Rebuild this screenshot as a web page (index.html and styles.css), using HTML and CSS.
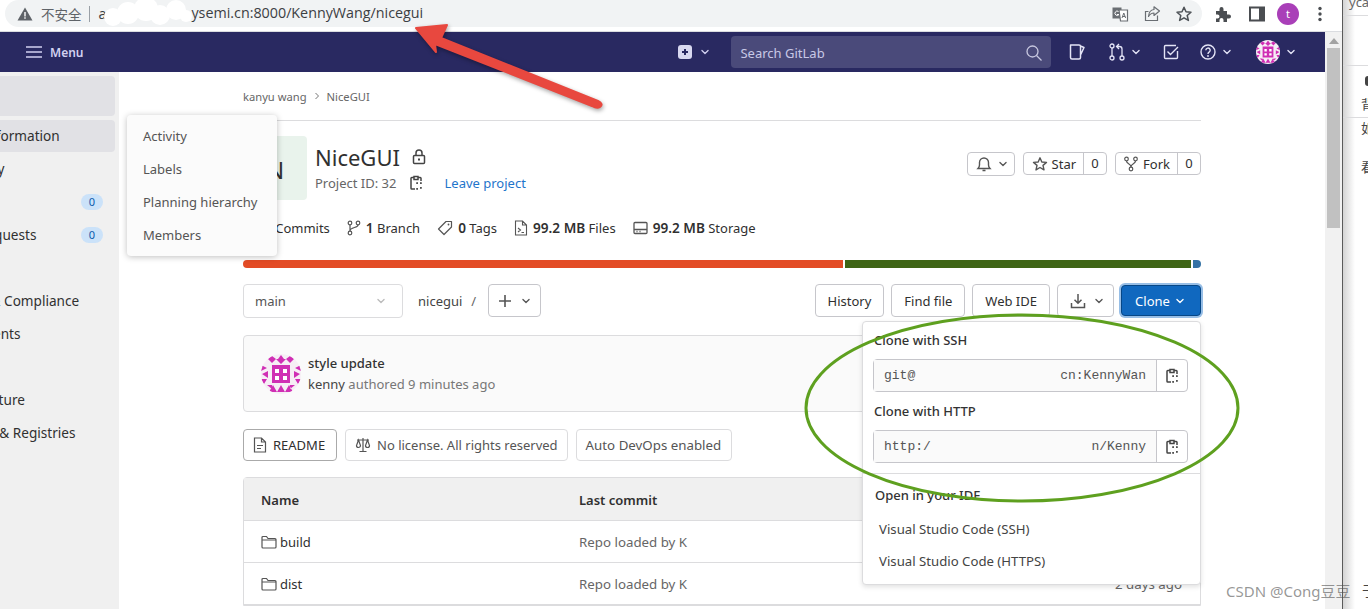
FILE: index.html
```html
<!DOCTYPE html>
<html lang="en">
<head>
    <meta charset="UTF-8">
    <meta name="viewport" content="width=device-width, initial-scale=1.0">
    <title>NiceGUI</title>
    <link rel="stylesheet" href="styles.css">
</head>
<body>
    <!-- Shared icons -->
    <svg class="sprite" width="0" height="0">
        <symbol id="i-chevron" viewBox="0 0 16 16"><path d="M4.500 6.200 8 9.700l3.500-3.500" fill="none" stroke="currentColor" stroke-width="1.500" stroke-linecap="round" stroke-linejoin="round"/></symbol>
        <symbol id="i-copy" viewBox="0 0 16 16"><path d="M6 2.500H3.800c-.5 0-.8.3-.8.8v10c0 .5.3.8.8.8H7M10 2.500h2.200c.5 0 .8.3.8.8V6M6 1.500h4v3H6zM9 9V8h1M12 8h1v1M13 12v1h-1M10 14H9v-1" fill="none" stroke="currentColor" stroke-width="1.500"/></symbol>
        <symbol id="i-folder" viewBox="0 0 16 16"><path d="M1 3.500c0-.6.4-1 1-1h3.500l1.500 2h7c.6 0 1 .4 1 1v7.500c0 .6-.4 1-1 1H2c-.6 0-1-.4-1-1zM1 6h14" fill="none" stroke="currentColor" stroke-width="1.200"/></symbol>
        <symbol id="i-identicon" viewBox="0 0 40 40">
            <clipPath id="round"><circle cx="20" cy="20" r="20"/></clipPath>
            <g clip-path="url(#round)">
                <rect width="40" height="40" fill="#f6eef5"/>
                <path d="M11 11h18v18H11z" fill="#d02fb4"/>
                <path d="M14 15h4v4h-4zM22 15h4v4h-4zM14 22h4v4h-4zM22 22h4v4h-4z" fill="#fff"/>
                <path d="M11 2l4 3-4 4-4-4zM29 2l4 3-4 4-4-4zM20 1l3 4-3 4-3-4zM15 5h10l-5 5zM0 11l6 3-6 3zM40 11l-6 3 6 3zM1 20l6-3v7zM39 20l-6-3v7zM0 25h6l-3 5zM40 25h-6l3 5zM6 31h5v4zM34 31h-5v4zM8 38l4-7 4 7zM16 38l4-7 4 7zM24 38l4-7 4 7z" fill="#d02fb4"/>
            </g>
        </symbol>
    </svg>

    <div class="window">
        <div class="browser">
            <div class="toolbar">
                <div class="omnibox">
                    <svg class="warn" width="16" height="16" viewBox="0 0 16 16"><path d="M8 1.500 15.500 14.500H.5z" fill="#5f6368"/><path d="M7.300 6h1.400v4.500H7.300zM7.300 11.300h1.400v1.400H7.300z" fill="#fff"/></svg>
                    <span class="not-secure">不安全</span>
                    <span class="omni-sep"></span>
                    <span class="url-start">a</span>
                    <span class="url">ysemi.cn:8000/KennyWang/nicegui</span>
                    <div class="omni-icons">
                        <svg width="18" height="18" viewBox="0 0 18 18"><path d="M1.500 2.500h9v11h-9z" fill="#6a6e73"/><path d="M8 5h8.500v11H9.500z" fill="#fff" stroke="#6a6e73" stroke-width="1.200"/><path d="M7.500 6.500a2.200 2.200 0 1 0 .5 3H6" fill="none" stroke="#fff" stroke-width="1"/><path d="M11 13l1.800-5 1.800 5M11.500 11.500h2.600" fill="none" stroke="#6a6e73"/></svg>
                        <svg width="18" height="18" viewBox="0 0 18 18"><path d="M14.500 10.500v5h-12v-9h3" fill="none" stroke="#6a6e73" stroke-width="1.200"/><path d="M16.500 6 11 1.800v2.700C7.500 4.800 5.800 7.500 5.500 11.500 7 9 8.500 8 11 8v2.500z" fill="none" stroke="#6a6e73" stroke-width="1.200" stroke-linejoin="round"/></svg>
                        <svg width="18" height="18" viewBox="0 0 18 18"><path d="M9 2.200 11 6.800l5 .4-3.800 3.300 1.200 4.900L9 12.800l-4.400 2.600 1.200-4.900L2 7.200l5-.4z" fill="none" stroke="#4e5257" stroke-width="1.500" stroke-linejoin="round"/></svg>
                    </div>
                </div>
                <div class="chrome-icons">
                    <svg width="18" height="18" viewBox="0 0 18 18"><path d="M2 6h3.500V4a2 2 0 0 1 4 0v2H13v3.500h2a2 2 0 0 1 0 4h-2V17H9.500v-2a2 2 0 0 0-4 0v2H2v-3.500h1.500a2 2 0 0 0 0-4H2z" fill="#4a4d51"/></svg>
                    <svg class="ci-panel" width="16" height="16" viewBox="0 0 16 16"><path d="M1 1.500h14v13H1z" fill="none" stroke="#4a4d51" stroke-width="2"/><path d="M10 1.500h5v13h-5z" fill="#4a4d51"/></svg>
                    <span class="profile">t</span>
                    <svg class="ci-dots" width="4" height="16" viewBox="0 0 4 16"><circle cx="2" cy="2.500" r="1.700" fill="#4a4d51"/><circle cx="2" cy="8" r="1.700" fill="#4a4d51"/><circle cx="2" cy="13.500" r="1.700" fill="#4a4d51"/></svg>
                </div>
            </div>

            <div class="frame">
                <div class="page">
                    <nav class="navbar">
                        <svg class="menu-icon" width="16" height="16" viewBox="0 0 16 16"><path d="M0 3h16M0 8h16M0 13h16" stroke="#d1d0f0" stroke-width="1.500" stroke-linecap="round"/></svg>
                        <span class="menu-label">Menu</span>
                        <div class="nav-new">
                            <svg width="14" height="14" viewBox="0 0 14 14"><rect width="14" height="14" rx="3" fill="#d8d8f0"/><path d="M7 4v6M4 7h6" stroke="#292961" stroke-width="2"/></svg>
                            <svg class="chev" width="14" height="14"><use href="#i-chevron"/></svg>
                        </div>
                        <div class="nav-search">
                            <span>Search GitLab</span>
                            <svg width="18" height="18" viewBox="0 0 18 18"><circle cx="7.500" cy="7.500" r="5.500" fill="none" stroke="#c8c8e0" stroke-width="1.300"/><path d="m11.500 11.500 5 5" stroke="#c8c8e0" stroke-width="1.300"/></svg>
                        </div>
                        <div class="nav-icons">
                            <svg class="nav-issues" width="16" height="18" viewBox="0 0 16 18"><path d="M1.500 2h8.500c1 0 1.500.7 1.500 1.500v11c0 1-.5 1.500-1.500 1.500H3c-1 0-1.500-.5-1.500-1.500zM11.500 3 15 4.500 11.500 12" fill="none" stroke="#e4e4f6" stroke-width="1.500" stroke-linejoin="round"/></svg>
                            <span class="nav-drop">
                                <svg width="16" height="18" viewBox="0 0 16 18"><circle cx="3" cy="3" r="2" fill="none" stroke="#e4e4f6" stroke-width="1.300"/><circle cx="3" cy="15" r="2" fill="none" stroke="#e4e4f6" stroke-width="1.300"/><circle cx="13" cy="15" r="2" fill="none" stroke="#e4e4f6" stroke-width="1.300"/><path d="M3 5v8M13 13V6c0-1.500-1-2.500-2.500-2.500H8M10 1 7.500 3.500 10 6" fill="none" stroke="#e4e4f6" stroke-width="1.300"/></svg>
                                <svg class="chev" width="14" height="14"><use href="#i-chevron"/></svg>
                            </span>
                            <svg class="nav-todo" width="16" height="16" viewBox="0 0 16 16"><path d="M14.500 7v6.500c0 .6-.4 1-1 1h-11c-.6 0-1-.4-1-1v-11c0-.6.4-1 1-1H13" fill="none" stroke="#e4e4f6" stroke-width="1.400"/><path d="m4.500 7.500 3 3L15 3" fill="none" stroke="#e4e4f6" stroke-width="1.400"/></svg>
                            <span class="nav-drop">
                                <svg width="16" height="16" viewBox="0 0 16 16"><circle cx="8" cy="8" r="7" fill="none" stroke="#e4e4f6" stroke-width="1.400"/><path d="M5.800 6.300a2.200 2.200 0 1 1 3.300 1.900c-.8.500-1.100 1-1.100 1.800" fill="none" stroke="#e4e4f6" stroke-width="1.400"/><circle cx="8" cy="12" r=".9" fill="#e4e4f6"/></svg>
                                <svg class="chev" width="14" height="14"><use href="#i-chevron"/></svg>
                            </span>
                            <span class="nav-drop nav-user">
                                <svg width="24" height="24"><use href="#i-identicon"/></svg>
                                <svg class="chev" width="14" height="14"><use href="#i-chevron"/></svg>
                            </span>
                        </div>
                    </nav>

                    <div class="layout">
                        <aside class="sidebar">
                            <div class="side-context"></div>
                            <a class="side-item active"><span>Project information</span></a>
                            <a class="side-item"><span>Repository</span></a>
                            <a class="side-item"><span>Issues</span><b class="badge">0</b></a>
                            <a class="side-item"><span>Merge requests</span><b class="badge">0</b></a>
                            <a class="side-item"><span>CI/CD</span></a>
                            <a class="side-item"><span>Security &amp; Compliance</span></a>
                            <a class="side-item"><span>Deployments</span></a>
                            <a class="side-item"><span>Monitor</span></a>
                            <a class="side-item"><span>Infrastructure</span></a>
                            <a class="side-item"><span>Packages &amp; Registries</span></a>
                        </aside>

                        <main class="content">
                            <div class="breadcrumb">
                                <span>kanyu wang</span>
                                <svg width="10" height="10" viewBox="0 0 10 10"><path d="m3.500 2 3 3-3 3" fill="none" stroke="#777" stroke-width="1"/></svg>
                                <span>NiceGUI</span>
                            </div>

                            <div class="project-head">
                                <div class="project-avatar">N</div>
                                <div class="project-title">
                                    <h1>NiceGUI
                                        <svg width="14" height="16" viewBox="0 0 14 16"><rect x="1.500" y="6.500" width="11" height="8" rx="1" fill="none" stroke="#444" stroke-width="1.500"/><path d="M4 6.500V4a3 3 0 0 1 6 0v2.500" fill="none" stroke="#444" stroke-width="1.500"/><rect x="6" y="9.500" width="2" height="2" fill="#444"/></svg>
                                    </h1>
                                    <div class="project-id">
                                        <span>Project ID: 32</span>
                                        <svg width="16" height="16"><use href="#i-copy"/></svg>
                                        <a>Leave project</a>
                                    </div>
                                </div>
                                <div class="project-actions">
                                    <button class="btn bell">
                                        <svg width="16" height="16" viewBox="0 0 16 16"><path d="M2 12.500h12c-1-1-1.500-2-1.500-3.500V6.500a4.500 4.500 0 0 0-9 0V9c0 1.500-.5 2.500-1.500 3.500zM6.500 14.500h3" fill="none" stroke="#555" stroke-width="1.400"/></svg>
                                        <svg width="14" height="14"><use href="#i-chevron"/></svg>
                                    </button>
                                    <div class="count-btn">
                                        <span class="count-label star-label">
                                            <svg width="16" height="16" viewBox="0 0 16 16"><path d="M8 1.800 9.800 6l4.700.4-3.500 3 1 4.500L8 11.500l-4 2.400 1-4.500-3.500-3L6.200 6z" fill="none" stroke="#555" stroke-width="1.400" stroke-linejoin="round"/></svg>
                                            Star
                                        </span>
                                        <span class="count-num">0</span>
                                    </div>
                                    <div class="count-btn">
                                        <span class="count-label">
                                            <svg width="16" height="16" viewBox="0 0 16 16"><circle cx="3.500" cy="3" r="1.800" fill="none" stroke="#555" stroke-width="1.200"/><circle cx="12.500" cy="3" r="1.800" fill="none" stroke="#555" stroke-width="1.200"/><circle cx="8" cy="13" r="1.800" fill="none" stroke="#555" stroke-width="1.200"/><path d="M3.500 5c0 3 4.500 2.500 4.500 6M12.500 5c0 3-4.500 2.500-4.500 6" fill="none" stroke="#555" stroke-width="1.200"/></svg>
                                            Fork
                                        </span>
                                        <span class="count-num">0</span>
                                    </div>
                                </div>
                            </div>

                            <div class="stats">
                                <span class="stat">
                                    <svg width="16" height="16" viewBox="0 0 16 16"><circle cx="8" cy="8" r="3" fill="none" stroke="#555" stroke-width="1.400"/><path d="M0 8h5M11 8h5" stroke="#555" stroke-width="1.400"/></svg>
                                    <span><b>3</b> Commits</span>
                                </span>
                                <span class="stat">
                                    <svg width="14" height="16" viewBox="0 0 14 16"><circle cx="3" cy="3" r="1.800" fill="none" stroke="#555" stroke-width="1.200"/><circle cx="3" cy="13" r="1.800" fill="none" stroke="#555" stroke-width="1.200"/><circle cx="11" cy="3" r="1.800" fill="none" stroke="#555" stroke-width="1.200"/><path d="M3 5v6M11 5c0 3-8 2-8 6" fill="none" stroke="#555" stroke-width="1.200"/></svg>
                                    <span><b>1</b> Branch</span>
                                </span>
                                <span class="stat">
                                    <svg width="16" height="16" viewBox="0 0 16 16"><path d="M9 1.500h5.500V7l-7.500 7.500L1.500 9z" fill="none" stroke="#555" stroke-width="1.200" stroke-linejoin="round"/><circle cx="11.500" cy="4.500" r=".9" fill="#555"/></svg>
                                    <span><b>0</b> Tags</span>
                                </span>
                                <span class="stat">
                                    <svg width="14" height="16" viewBox="0 0 14 16"><path d="M1.500 1h7l4 4v10h-11zM8.500 1v4h4M4 8l2.500 2L4 12M7.500 12.500H10" fill="none" stroke="#555" stroke-width="1.100"/></svg>
                                    <span><b>99.2 MB</b> Files</span>
                                </span>
                                <span class="stat">
                                    <svg width="15" height="16" viewBox="0 0 15 16"><path d="M1 3.500c0-.6.4-1 1-1h11c.6 0 1 .4 1 1v9c0 .6-.4 1-1 1H2c-.6 0-1-.4-1-1zM1 9.500h13M3.500 11.500h1M6.500 11.500h1" fill="none" stroke="#555" stroke-width="1.300"/></svg>
                                    <span><b>99.2 MB</b> Storage</span>
                                </span>
                            </div>

                            <div class="lang-bar">
                                <i class="lang-orange"></i>
                                <i class="lang-green"></i>
                                <i class="lang-blue"></i>
                            </div>

                            <div class="tree-bar">
                                <div class="branch-select">
                                    <span>main</span>
                                    <svg width="14" height="14"><use href="#i-chevron"/></svg>
                                </div>
                                <span class="tree-path">nicegui</span>
                                <span class="tree-slash">/</span>
                                <button class="btn add-btn">
                                    <svg width="16" height="16" viewBox="0 0 16 16"><path d="M8 2v12M2 8h12" stroke="#555" stroke-width="1.600"/></svg>
                                    <svg width="14" height="14"><use href="#i-chevron"/></svg>
                                </button>
                                <div class="tree-actions">
                                    <button class="btn">History</button>
                                    <button class="btn">Find file</button>
                                    <button class="btn">Web IDE</button>
                                    <button class="btn dl-btn">
                                        <svg width="16" height="16" viewBox="0 0 16 16"><path d="M8 1v9M4.500 6.800 8 10.300l3.500-3.500M1.500 10v4.500h13V10" fill="none" stroke="#555" stroke-width="1.500"/></svg>
                                        <svg width="14" height="14"><use href="#i-chevron"/></svg>
                                    </button>
                                    <div class="clone-wrap">
                                        <button class="clone-btn">Clone
                                            <svg width="14" height="14"><use href="#i-chevron"/></svg>
                                        </button>
                                        <div class="clone-menu">
                                            <div class="clone-label">Clone with SSH</div>
                                            <div class="clone-field">
                                                <div class="clone-url"><span>git@</span><span>cn:KennyWan</span></div>
                                                <span class="clone-copy"><svg width="16" height="16"><use href="#i-copy"/></svg></span>
                                            </div>
                                            <div class="clone-label">Clone with HTTP</div>
                                            <div class="clone-field">
                                                <div class="clone-url"><span>http:/</span><span>n/Kenny</span></div>
                                                <span class="clone-copy"><svg width="16" height="16"><use href="#i-copy"/></svg></span>
                                            </div>
                                            <div class="clone-ide">
                                                <div class="ide-title">Open in your IDE</div>
                                                <div class="ide-item">Visual Studio Code (SSH)</div>
                                                <div class="ide-item">Visual Studio Code (HTTPS)</div>
                                            </div>
                                        </div>
                                    </div>
                                </div>
                            </div>

                            <div class="commit-box">
                                <svg width="40" height="40"><use href="#i-identicon"/></svg>
                                <div>
                                    <div class="commit-title">style update</div>
                                    <div class="commit-meta"><span>kenny</span> authored 9 minutes ago</div>
                                </div>
                            </div>

                            <div class="repo-links">
                                <button class="btn readme">
                                    <svg width="14" height="16" viewBox="0 0 14 16"><path d="M1.500 1h7l4 4v10h-11zM8.500 1v4h4M4 8.500h6M4 11.500h4" fill="none" stroke="#555" stroke-width="1.200"/></svg>
                                    README
                                </button>
                                <button class="btn link-btn">
                                    <svg width="16" height="16" viewBox="0 0 16 16"><path d="M8 1v13M4.500 14.500h7M2 3h12M3.500 3 1.500 8.500a2 2 0 0 0 4 0zM12.500 3l-2 5.500a2 2 0 0 0 4 0z" fill="none" stroke="#555" stroke-width="1.200"/></svg>
                                    No license. All rights reserved
                                </button>
                                <button class="btn link-btn devops">Auto DevOps enabled</button>
                            </div>

                            <div class="file-table">
                                <div class="file-row file-head">
                                    <span>Name</span>
                                    <span>Last commit</span>
                                    <span>Last update</span>
                                </div>
                                <div class="file-row">
                                    <span class="file-name"><svg width="16" height="16"><use href="#i-folder"/></svg>build</span>
                                    <span class="file-commit">Repo loaded by K</span>
                                    <span class="file-date">2 days ago</span>
                                </div>
                                <div class="file-row">
                                    <span class="file-name"><svg width="16" height="16"><use href="#i-folder"/></svg>dist</span>
                                    <span class="file-commit">Repo loaded by K</span>
                                    <span class="file-date">2 days ago</span>
                                </div>
                            </div>
                        </main>
                    </div>

                    <!-- Hover flyout of Project information -->
                    <div class="flyout">
                        <div>Activity</div>
                        <div>Labels</div>
                        <div>Planning hierarchy</div>
                        <div>Members</div>
                    </div>
                </div>

                <div class="scrollbar">
                    <svg width="10" height="6" viewBox="0 0 10 6"><path d="M5 0l5 6H0z" fill="#a3a3a3"/></svg>
                    <div class="scroll-thumb"></div>
                </div>
            </div>
        </div>

        <!-- Sliver of the next window -->
        <div class="next-window">
            <div class="next-top">ycan</div>
            <div class="next-block next-first">
                <div class="next-icon"></div>
                <div>背</div>
            </div>
            <div class="next-block">
                <div>如</div>
                <div class="next-gap">看</div>
            </div>
        </div>
    </div>

    <!-- Marks drawn on the screenshot -->
    <svg class="marks" width="1368" height="609" viewBox="0 0 1368 609">
        <g fill="#fff">
            <circle cx="113" cy="17" r="9"/>
            <circle cx="128" cy="13" r="11"/>
            <circle cx="146" cy="9" r="12"/>
            <circle cx="160" cy="15" r="10"/>
            <circle cx="176" cy="10" r="10"/>
            <circle cx="186" cy="16" r="6"/>
        </g>
        <g class="arrow">
            <path d="M416 28 447 25 441 38 598 101Q604 104 600 107 597 109 592 106L435 44 436 52z" fill="#e8483f" stroke="#e8483f" stroke-width="2" stroke-linejoin="round"/>
        </g>
        <ellipse cx="1022" cy="408" rx="216" ry="93" fill="none" stroke="#5ea01f" stroke-width="3"/>
    </svg>
    <div class="watermark">CSDN @Cong豆豆</div>
    <div class="watermark-tail">于</div>
</body>
</html>
```

FILE: styles.css
```css
* {
    margin: 0;
    padding: 0;
    box-sizing: border-box;
}

body {
    width: 1368px;
    height: 609px;
    overflow: hidden;
    position: relative;
    background: #fff;
    font-family: "Noto Sans", "Noto Sans CJK SC", sans-serif;
    font-size: 13px;
    color: #303030;
}

.sprite {
    position: absolute;
}

svg {
    flex: none;
    display: block;
}

.window {
    display: flex;
    height: 609px;
}

.browser {
    width: 1343px;
    display: flex;
    flex-direction: column;
    border-right: 1px solid #5a5a5a;
}

/* Browser toolbar */
.toolbar {
    height: 32px;
    display: flex;
    padding: 0 0 4px 5px;
    border-bottom: 1px solid #dadce0;
    background: #fff;
}

.omnibox {
    width: 1197px;
    height: 27px;
    display: flex;
    align-items: center;
    padding-left: 12px;
    background: #f1f3f4;
    border-radius: 14px;
}

.warn {
    margin-right: 8px;
}

.not-secure {
    font-size: 13.5px;
    color: #5f6368;
}

.omni-sep {
    width: 1px;
    height: 16px;
    margin: 0 9px 0 7px;
    background: #9aa0a6;
}

.url-start,
.url {
    font-size: 14.3px;
    color: #3c4043;
    font-family: "Open Sans", sans-serif;
}

.url {
    margin-left: 85px;
    margin-top: -2px;
}

.omni-icons {
    margin-left: auto;
    margin-right: 9px;
    display: flex;
    gap: 14px;
}

.chrome-icons {
    flex: 1;
    height: 27px;
    display: flex;
    align-items: center;
    padding-left: 12px;
}

.ci-panel {
    margin-left: 17px;
}

.profile {
    width: 22px;
    height: 22px;
    margin-left: 12px;
    border-radius: 50%;
    background: #a93fb8;
    color: #fff;
    font-size: 11px;
    line-height: 22px;
    text-align: center;
}

.ci-dots {
    margin-left: 19px;
}

.frame {
    flex: 1;
    display: flex;
    min-height: 0;
}

.page {
    flex: 1;
    position: relative;
    overflow: hidden;
}

.scrollbar {
    width: 17px;
    display: flex;
    flex-direction: column;
    align-items: center;
    padding-top: 6px;
    background: #f1f1f1;
}

.scroll-thumb {
    width: 13px;
    height: 180px;
    margin-top: 4px;
    background: #c1c1c1;
}

/* GitLab navbar */
.navbar {
    height: 40px;
    display: flex;
    align-items: center;
    padding-left: 26px;
    background: #292961;
}

.menu-label {
    margin-left: 8px;
    font-size: 12px;
    font-weight: 600;
    color: #d1d0f0;
}

.nav-new {
    display: flex;
    align-items: center;
    gap: 6px;
    margin-left: 595px;
    color: #d1d0f0;
}

.nav-search {
    width: 320px;
    height: 32px;
    margin-left: 19px;
    display: flex;
    align-items: center;
    justify-content: space-between;
    padding: 1px 8px 0 9px;
    border-radius: 4px;
    background: #4a4a7a;
    color: #c8c8e6;
    font-size: 13px;
}

.nav-icons {
    display: flex;
    align-items: center;
    margin-left: 18px;
    color: #e4e4f6;
}

.nav-drop {
    display: flex;
    align-items: center;
    gap: 4px;
}

.nav-issues {
    margin-right: 24px;
}

.nav-todo {
    margin: 0 21px 0 20px;
}

.nav-user {
    margin-left: 22px;
}

/* Sidebar */
.layout {
    display: flex;
}

.sidebar {
    width: 119px;
    height: 537px;
    flex: none;
    overflow: hidden;
    padding: 4px 4px 0 0;
    background: #f0f0f0;
    font-size: 13.6px;
}

.side-context {
    height: 40px;
    margin-bottom: 4px;
    border-radius: 0 4px 4px 0;
    background: #e1e1e5;
}

.side-item {
    height: 32px;
    margin-bottom: 1px;
    display: flex;
    align-items: center;
    padding-right: 12px;
    color: #303030;
    white-space: nowrap;
}

.side-item span {
    margin-left: -64px;
    padding-bottom: 2px;
}

.side-item.active {
    border-radius: 0 4px 4px 0;
    background: #e1e1e5;
}

.badge {
    width: 22px;
    height: 16px;
    margin-left: auto;
    border-radius: 8px;
    background: #cbe2f9;
    color: #0b5cad;
    font-size: 11px;
    font-weight: 400;
    line-height: 16px;
    text-align: center;
}

/* Main content */
.content {
    width: 958px;
    margin-left: 124px;
    flex: none;
}

.breadcrumb {
    height: 49px;
    display: flex;
    align-items: center;
    gap: 5px;
    border-bottom: 1px solid #dcdcde;
    font-size: 11.2px;
    color: #666;
}

.project-head {
    display: flex;
    margin-top: 15px;
}

.project-avatar {
    width: 64px;
    height: 64px;
    border-radius: 4px;
    background: #e9f3ec;
    font-size: 24px;
    line-height: 68px;
    text-align: center;
    color: #303030;
}

.project-title {
    margin-left: 8px;
}

.project-title h1 {
    display: flex;
    align-items: center;
    gap: 12px;
    height: 30px;
    margin-top: 6px;
    font-size: 22px;
    font-weight: 400;
    color: #303030;
}

.project-id {
    display: flex;
    align-items: center;
    margin-top: 2px;
    color: #666;
}

.project-id svg {
    margin-left: 12px;
    color: #444;
}

.project-id a {
    margin-left: 20px;
    color: #1f75cb;
}

.project-actions {
    display: flex;
    gap: 8px;
    margin-left: auto;
    margin-top: 16px;
}

.btn {
    height: 32px;
    display: flex;
    align-items: center;
    padding: 0 12px;
    border: 1px solid #c6c6cb;
    border-radius: 4px;
    background: #fff;
    font-family: inherit;
    font-size: 13px;
    color: #303030;
}

.bell {
    width: 48px;
    height: 24px;
    padding: 0 0 0 8px;
    gap: 4px;
    color: #555;
}

.count-btn {
    display: flex;
    height: 23px;
    border: 1px solid #c6c6cb;
    border-radius: 4px;
}

.count-label {
    display: flex;
    align-items: center;
    gap: 4px;
    padding: 0 7px;
    border-right: 1px solid #c6c6cb;
}

.star-label {
    padding-left: 8px;
}

.count-num {
    width: 22px;
    line-height: 21px;
    text-align: center;
}

.stats {
    display: flex;
    height: 24px;
    margin-top: 16px;
    gap: 17px;
}

.stat {
    display: flex;
    align-items: center;
    gap: 5px;
    white-space: nowrap;
}

.stat span {
    padding-bottom: 2px;
}

.stat b {
    font-size: 13.6px;
    font-weight: 600;
}

.lang-bar {
    display: flex;
    gap: 2px;
    height: 8px;
    margin-top: 20px;
}

.lang-orange {
    width: 600px;
    background: #e34c26;
    border-radius: 4px 0 0 4px;
}

.lang-green {
    width: 346px;
    background: #3f6516;
}

.lang-blue {
    width: 8px;
    background: #3572a5;
    border-radius: 0 4px 4px 0;
}

/* Repository toolbar */
.tree-bar {
    display: flex;
    align-items: center;
    height: 33px;
    margin-top: 16px;
}

.branch-select {
    width: 160px;
    height: 34px;
    display: flex;
    align-items: center;
    justify-content: space-between;
    padding: 0 14px 0 11px;
    border: 1px solid #dcdcde;
    border-radius: 4px;
    color: #555;
}

.branch-select svg {
    color: #bbb;
}

.tree-path {
    margin-left: 15px;
    color: #444;
}

.tree-slash {
    margin: 0 12px 0 9px;
    color: #666;
}

.add-btn {
    width: 53px;
    height: 33px;
    padding: 0 0 0 8px;
    gap: 6px;
    color: #555;
}

.tree-actions {
    display: flex;
    gap: 7px;
    margin-left: auto;
}

.tree-actions .btn {
    height: 33px;
}

.dl-btn {
    width: 57px;
    gap: 6px;
    padding: 0 0 0 12px !important;
    color: #555;
}

.clone-wrap {
    position: relative;
}

.clone-btn {
    width: 80px;
    height: 31px;
    margin-top: 1px;
    display: flex;
    align-items: center;
    justify-content: center;
    gap: 3px;
    border: 1px solid #064787;
    border-radius: 4px;
    background: #1068bf;
    box-shadow: 0 0 0 2px #97bee6;
    font-family: inherit;
    font-size: 13px;
    color: #fff;
}

/* Clone dropdown */
.clone-menu {
    position: absolute;
    top: 37px;
    right: 0;
    width: 339px;
    height: 264px;
    padding: 9px 12px 0 10px;
    border: 1px solid #dcdcde;
    border-radius: 4px;
    background: #fff;
    box-shadow: 0 2px 5px rgba(0, 0, 0, 0.12);
    z-index: 2;
}

.clone-label {
    height: 18px;
    margin-left: 1px;
    font-weight: 500;
    line-height: 18px;
    color: #333;
}

.clone-field {
    display: flex;
    height: 33px;
    margin: 10px 0 10px;
    border: 1px solid #c6c6cb;
    border-radius: 4px;
}

.clone-url {
    flex: 1;
    display: flex;
    justify-content: space-between;
    align-items: center;
    padding: 0 10px;
    background: #fafafa;
    font-family: "Liberation Mono", monospace;
    font-size: 13px;
    color: #555;
}

.clone-copy {
    width: 31px;
    display: flex;
    align-items: center;
    justify-content: center;
    border-left: 1px solid #c6c6cb;
    color: #444;
}

.clone-ide {
    margin: 0 -12px 0 -10px;
    padding: 12px 12px 0 12px;
    border-top: 1px solid #dcdcde;
}

.ide-title {
    margin-bottom: 9px;
    font-weight: 500;
    color: #333;
}

.ide-item {
    height: 32px;
    margin-left: 4px;
    font-size: 13.2px;
    line-height: 32px;
    color: #444;
}

.commit-box {
    height: 77px;
    margin-top: 18px;
    display: flex;
    align-items: center;
    gap: 7px;
    padding-left: 17px;
    border: 1px solid #dcdcde;
    border-radius: 4px;
    background: #fafafa;
}

.commit-title {
    font-weight: 500;
    color: #333;
}

.commit-meta {
    margin-top: 3px;
    color: #777;
}

.commit-meta span {
    color: #444;
}

.repo-links {
    display: flex;
    gap: 8px;
    margin-top: 17px;
}

.repo-links .btn {
    gap: 6px;
    height: 32px;
    white-space: nowrap;
}

.readme {
    width: 94px;
    border-color: #aaa;
    padding: 0 9px;
}

.link-btn {
    padding: 0 9px;
    border-color: #dcdcde;
    color: #555;
}

.devops {
    width: 156px;
    font-size: 13.3px;
}

/* File table */
.file-table {
    margin-top: 16px;
    border: 1px solid #dcdcde;
    border-radius: 4px 4px 0 0;
}

.file-row {
    display: grid;
    grid-template-columns: 318px 1fr auto;
    align-items: center;
    height: 42px;
    padding: 0 18px 0 17px;
    border-bottom: 1px solid #dcdcde;
}

.file-head {
    height: 43px;
    padding-top: 1px;
    background: #f0f0f0;
    font-weight: 600;
    color: #303030;
}

.file-name {
    display: flex;
    align-items: center;
    gap: 3px;
}

.file-name svg {
    color: #555;
}

.file-commit,
.file-date {
    font-size: 13.3px;
    color: #666;
}

/* Project information flyout */
.flyout {
    position: absolute;
    left: 127px;
    top: 83px;
    width: 150px;
    padding: 5px 0 4px;
    border-radius: 4px;
    background: #fbfbfb;
    box-shadow: 0 1px 6px rgba(0, 0, 0, 0.25);
    z-index: 3;
    color: #555;
}

.flyout div {
    height: 33px;
    padding-left: 16px;
    line-height: 33px;
    white-space: nowrap;
}

/* Next window on the right */
.next-window {
    flex: 1;
    overflow: hidden;
    background: linear-gradient(90deg, #d4d4d4, #fff 12px);
    color: #444;
    font-size: 13px;
}

.next-top {
    height: 16px;
    padding-left: 6px;
    border-bottom: 1px solid #dcdcde;
    line-height: 4px;
    color: #666;
    overflow: hidden;
}

.next-block {
    padding-left: 18px;
    border-top: 1px solid #dcdcde;
    line-height: 20px;
}

.next-first {
    margin-top: 49px;
    height: 52px;
    padding-top: 10px;
}

.next-icon {
    width: 8px;
    height: 10px;
    margin: 0 0 8px 4px;
    background: #444;
    border-radius: 3px;
}

.next-gap {
    margin-top: 19px;
}

/* Annotations */
.marks {
    position: absolute;
    left: 0;
    top: 0;
    z-index: 5;
    pointer-events: none;
}

.arrow {
    filter: drop-shadow(1px 2px 2px rgba(0, 0, 0, 0.35));
}

.watermark {
    position: absolute;
    left: 1226px;
    top: 580px;
    z-index: 6;
    font-size: 15px;
    color: rgba(80, 80, 80, 0.6);
    white-space: nowrap;
}

.watermark-tail {
    position: absolute;
    left: 1362px;
    top: 580px;
    z-index: 6;
    font-size: 14px;
    color: #444;
}
```
